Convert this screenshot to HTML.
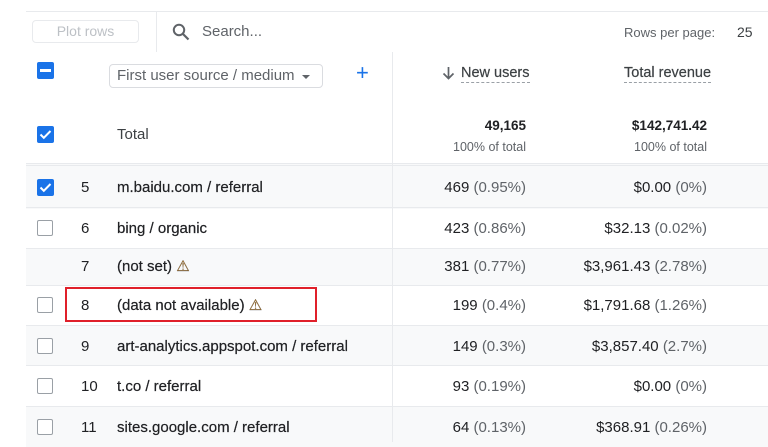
<!DOCTYPE html>
<html><head><style>
body{margin:0;width:768px;height:442px;background:#fff;font-family:"Liberation Sans",sans-serif;position:relative;overflow:hidden;color:#202124}
.a{position:absolute;white-space:nowrap}
.row{position:absolute;left:26px;right:0;border-top:1px solid #e8eaed}
.g{background:#f8f9fa}
.cb{position:absolute;left:37px;width:16px;height:16px;border:1.5px solid #9aa0a6;border-radius:2px;box-sizing:border-box;background:#fff}
.cbb{position:absolute;left:37px;width:17px;height:17px;border-radius:2px;background:#1a73e8}
.n{position:absolute;left:81px;font-size:15px}
.t{position:absolute;left:117px;font-size:15px;-webkit-text-stroke:0.2px #202124}
.v1{position:absolute;right:242px;font-size:15px}
.v2{position:absolute;right:61px;font-size:15px}
.p{color:#5f6368}
</style></head><body>
<div class="a" style="left:26px;right:0;top:11px;border-top:1px solid #e8eaed"></div>
<div class="a" style="left:32px;top:20px;width:107px;height:23px;border:1px solid #e8eaed;border-radius:4px;box-sizing:border-box;font-size:14px;color:#bdc1c6;text-align:center;line-height:21px">Plot rows</div>
<div class="a" style="left:156px;top:12px;height:40px;border-left:1px solid #e8eaed"></div>
<svg class="a" style="left:172px;top:23px" width="18" height="18" viewBox="0 0 18 18"><circle cx="7" cy="7" r="5.2" fill="none" stroke="#5f6368" stroke-width="2"/><path d="M11 11l5.5 5.5" stroke="#5f6368" stroke-width="2.2"/></svg>
<div class="a" style="left:202px;top:23px;font-size:15px;color:#5f6368">Search...</div>
<div class="a" style="left:624px;top:25px;font-size:13px;color:#5f6368">Rows per page:</div>
<div class="a" style="left:737px;top:24px;font-size:14px;color:#3c4043">25</div>
<div class="cbb" style="top:62px"><div style="position:absolute;left:3px;right:3px;top:7px;height:3px;background:#fff"></div></div>
<div class="a" style="left:109px;top:64px;width:214px;height:24px;border:1px solid #dadce0;border-radius:4px;box-sizing:border-box;font-size:15px;color:#5f6368;padding-left:7px;line-height:22px">First user source / medium<span style="position:absolute;right:12px;top:10px;border:4px solid transparent;border-top:4px solid #5f6368;border-bottom:0"></span></div>
<div class="a" style="left:356px;top:62px;font-size:22px;color:#1a73e8;line-height:22px">+</div>
<svg class="a" style="left:442px;top:66px" width="13" height="14" viewBox="0 0 13 14"><path d="M6.5 1v11M1.5 7.5l5 5 5-5" fill="none" stroke="#5f6368" stroke-width="1.7"/></svg>
<div class="a" style="left:461px;top:65px;font-size:14.5px;color:#3c4043;border-bottom:1px dashed #9aa0a6;padding-bottom:1px;-webkit-text-stroke:0.2px #3c4043">New users</div>
<div class="a" style="left:624px;top:65px;font-size:14.5px;color:#3c4043;border-bottom:1px dashed #9aa0a6;padding-bottom:1px;-webkit-text-stroke:0.2px #3c4043">Total revenue</div>
<div class="cbb" style="top:126px"><svg width="17" height="17"><path d="M3.5 8.5l3.3 3.3L13.5 5" fill="none" stroke="#fff" stroke-width="2"/></svg></div>
<div class="a" style="left:117px;top:126px;font-size:15px;color:#3c4043">Total</div>
<div class="v1" style="top:118px;font-weight:bold;font-size:13.5px">49,165</div>
<div class="v1 p" style="top:140px;font-size:12.5px">100% of total</div>
<div class="v2" style="top:118px;font-weight:bold;font-size:13.5px">$142,741.42</div>
<div class="v2 p" style="top:140px;font-size:12.5px">100% of total</div>

<div class="row g" style="top:163px;height:43px;border-top:3px double #e8eaed"></div>
<div class="row" style="top:207px;height:40px"></div>
<div class="row g" style="top:248px;height:36px"></div>
<div class="row" style="top:285px;height:39px"></div>
<div class="row g" style="top:325px;height:39px"></div>
<div class="row" style="top:365px;height:40px"></div>
<div class="row g" style="top:406px;height:40px"></div>
<div class="a" style="left:392px;top:52px;bottom:0;border-left:1px solid #e8eaed"></div>

<div class="cbb" style="top:179px"><svg width="17" height="17"><path d="M3.5 8.5l3.3 3.3L13.5 5" fill="none" stroke="#fff" stroke-width="2"/></svg></div>
<div class="n" style="top:179px">5</div><div class="t" style="top:179px">m.baidu.com / referral</div>
<div class="v1" style="top:179px">469 <span class="p">(0.95%)</span></div><div class="v2" style="top:179px">$0.00 <span class="p">(0%)</span></div>

<div class="cb" style="top:220px"></div>
<div class="n" style="top:220px">6</div><div class="t" style="top:220px">bing / organic</div>
<div class="v1" style="top:220px">423 <span class="p">(0.86%)</span></div><div class="v2" style="top:220px">$32.13 <span class="p">(0.02%)</span></div>

<div class="n" style="top:258px">7</div><div class="t" style="top:257px">(not set) <span style="color:#c5862b">⚠</span></div>
<div class="v1" style="top:258px">381 <span class="p">(0.77%)</span></div><div class="v2" style="top:258px">$3,961.43 <span class="p">(2.78%)</span></div>

<div class="cb" style="top:297px"></div>
<div class="n" style="top:297px">8</div><div class="t" style="top:296px">(data not available) <span style="color:#c5862b">⚠</span></div>
<div class="v1" style="top:297px">199 <span class="p">(0.4%)</span></div><div class="v2" style="top:297px">$1,791.68 <span class="p">(1.26%)</span></div>
<div class="a" style="left:65px;top:287px;width:252px;height:35px;border:2.5px solid #e0202a;box-sizing:border-box"></div>

<div class="cb" style="top:338px"></div>
<div class="n" style="top:338px">9</div><div class="t" style="top:338px">art-analytics.appspot.com / referral</div>
<div class="v1" style="top:338px">149 <span class="p">(0.3%)</span></div><div class="v2" style="top:338px">$3,857.40 <span class="p">(2.7%)</span></div>

<div class="cb" style="top:378px"></div>
<div class="n" style="top:378px">10</div><div class="t" style="top:378px">t.co / referral</div>
<div class="v1" style="top:378px">93 <span class="p">(0.19%)</span></div><div class="v2" style="top:378px">$0.00 <span class="p">(0%)</span></div>

<div class="cb" style="top:419px"></div>
<div class="n" style="top:419px">11</div><div class="t" style="top:419px">sites.google.com / referral</div>
<div class="v1" style="top:419px">64 <span class="p">(0.13%)</span></div><div class="v2" style="top:419px">$368.91 <span class="p">(0.26%)</span></div>
</body></html>
